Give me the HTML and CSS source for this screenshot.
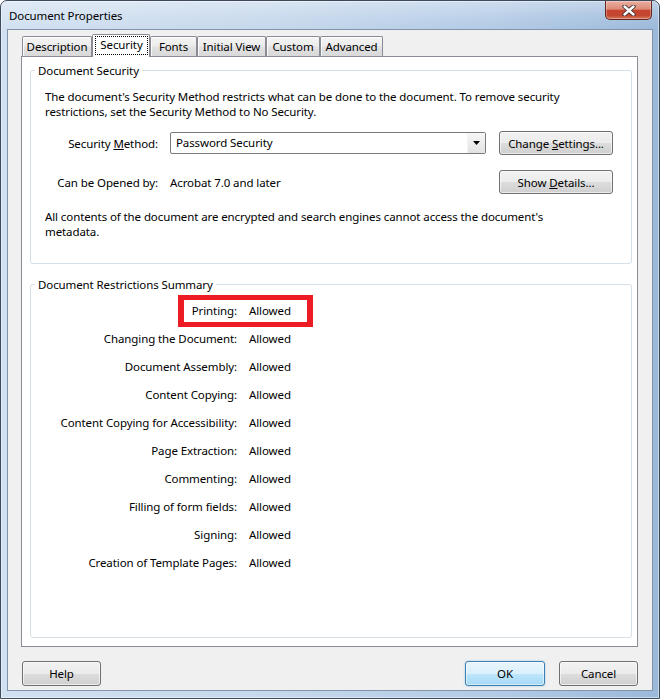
FILE: index.html
```html
<!DOCTYPE html>
<html lang="en">
<head>
<meta charset="utf-8">
<title>Document Properties</title>
<link rel="stylesheet" href="styles.css">
</head>
<body>
<div class="window">
  <div class="titlebar">
    <span class="title">Document Properties</span>
    <div class="close">
      <svg width="14" height="11" viewBox="0 0 14 11">
        <path d="M2.5 1.5 L11.5 9.5 M11.5 1.5 L2.5 9.5" stroke="#3a2d2f" stroke-width="4.2" stroke-linecap="round" fill="none"/>
        <path d="M2.5 1.5 L11.5 9.5 M11.5 1.5 L2.5 9.5" stroke="#ffffff" stroke-width="2.4" stroke-linecap="round" fill="none"/>
      </svg>
    </div>
  </div>
  <div class="client">
    <div class="tabs">
      <div class="tab tab-desc">Description</div>
      <div class="tab tab-sec active"><span class="focus">Security</span></div>
      <div class="tab tab-fonts">Fonts</div>
      <div class="tab tab-view">Initial View</div>
      <div class="tab tab-custom">Custom</div>
      <div class="tab tab-adv">Advanced</div>
    </div>
    <div class="panel">
      <fieldset class="group g1">
        <legend>Document Security</legend>
        <div class="g1-body">
          <p class="desc">The document's Security Method restricts what can be done to the document. To remove security<br>restrictions, set the Security Method to No Security.</p>
          <div class="form">
            <span class="lbl">Security <u>M</u>ethod:</span>
            <div class="combo">
              <span class="combo-text">Password Security</span>
              <span class="combo-btn">
                <svg width="7" height="4" viewBox="0 0 7 4"><polygon points="0,0 7,0 3.5,4" fill="#000"/></svg>
              </span>
            </div>
            <button class="btn" type="button">Change <u>S</u>ettings...</button>
            <span class="lbl">Can be Opened by:</span>
            <span class="val">Acrobat 7.0 and later</span>
            <button class="btn" type="button">Show <u>D</u>etails...</button>
          </div>
          <p class="desc desc2">All contents of the document are encrypted and search engines cannot access the document's<br>metadata.</p>
        </div>
      </fieldset>
      <fieldset class="group g2">
        <legend>Document Restrictions Summary</legend>
        <div class="restrictions">
          <span class="rl">Printing:</span><span class="rv">Allowed</span>
          <span class="rl">Changing the Document:</span><span class="rv">Allowed</span>
          <span class="rl">Document Assembly:</span><span class="rv">Allowed</span>
          <span class="rl">Content Copying:</span><span class="rv">Allowed</span>
          <span class="rl">Content Copying for Accessibility:</span><span class="rv">Allowed</span>
          <span class="rl">Page Extraction:</span><span class="rv">Allowed</span>
          <span class="rl">Commenting:</span><span class="rv">Allowed</span>
          <span class="rl">Filling of form fields:</span><span class="rv">Allowed</span>
          <span class="rl">Signing:</span><span class="rv">Allowed</span>
          <span class="rl">Creation of Template Pages:</span><span class="rv">Allowed</span>
          <div class="highlight"></div>
        </div>
      </fieldset>
    </div>
    <div class="footer">
      <button class="btn fbtn help" type="button">Help</button>
      <button class="btn fbtn ok" type="button">OK</button>
      <button class="btn fbtn cancel" type="button">Cancel</button>
    </div>
  </div>
</div>
</body>
</html>
```
FILE: styles.css
```css
* { box-sizing: border-box; }
html, body { margin: 0; padding: 0; }
body {
  width: 660px;
  height: 699px;
  overflow: hidden;
  background: #ffffff;
  font-family: "Noto Sans", "Open Sans", "DejaVu Sans", sans-serif;
  font-size: 11.5px;
  letter-spacing: -0.1px;
  color: #000;
}

.window {
  width: 660px;
  height: 699px;
  border: 1px solid #3d4a5c;
  border-radius: 7px 7px 0 0;
  padding: 0 6px 7px;
  display: flex;
  flex-direction: column;
  background: linear-gradient(90deg, #d2e1f1 0%, #c6d8ec 40%, #b3cbe6 75%, #9cb9da 100%);
  box-shadow: inset 0 0 0 1px rgba(255,255,255,0.45);
}

.titlebar {
  height: 28px;
  margin: 0 -6px;
  padding: 0 7px;
  display: flex;
  justify-content: space-between;
  align-items: flex-start;
  border-radius: 6px 6px 0 0;
  background: linear-gradient(180deg, rgba(255,255,255,0.35) 0%, rgba(255,255,255,0.1) 60%, rgba(255,255,255,0) 100%);
}
.title {
  margin-top: 7px;
  margin-left: 1px;
  line-height: 15px;
  white-space: nowrap;
}
.close {
  width: 47px;
  height: 19px;
  border: 1px solid #62261d;
  border-top: none;
  border-radius: 0 0 5px 5px;
  background: linear-gradient(180deg, #eab0a2 0%, #dc8a76 45%, #c8442f 52%, #c24630 80%, #d87a60 100%);
  box-shadow: inset 0 0 0 1px rgba(255,255,255,0.3);
  display: flex;
  align-items: center;
  justify-content: center;
}

.client {
  flex: 1;
  border: 1px solid #8194aa;
  background: #f0f0f0;
  padding: 4px 14px 4px 13px;
  display: flex;
  flex-direction: column;
}

.tabs {
  height: 22px;
  display: flex;
  align-items: flex-end;
  padding-left: 1px;
}
.tab {
  height: 20px;
  border: 1px solid #898c95;
  border-bottom: none;
  border-radius: 2px 2px 0 0;
  background: linear-gradient(180deg, #f5f5f5 0%, #ececec 45%, #e1e1e1 55%, #d9d9d9 100%);
  box-shadow: inset 1px 1px 0 rgba(255,255,255,0.8);
  display: flex;
  align-items: center;
  justify-content: center;
  line-height: 15px;
  white-space: nowrap;
  flex: none;
}
.tab-desc { width: 70px; }
.tab-sec { width: 58px; }
.tab-fonts { width: 47px; }
.tab-view { width: 69px; }
.tab-custom { width: 54px; }
.tab-adv { width: 63px; }
.tab.active {
  height: 23px;
  margin-bottom: -1px;
  background: #ffffff;
  box-shadow: none;
  position: relative;
  z-index: 1;
  align-items: flex-start;
  justify-content: flex-start;
  padding-top: 1px;
  padding-left: 2px;
}
.focus {
  width: 53px;
  height: 19px;
  border: 1px dotted #000;
  text-align: center;
  line-height: 16px;
}

.panel {
  height: 591px;
  flex: none;
  border: 1px solid #898c95;
  background: #ffffff;
  padding: 0 5px 8px 8px;
  display: flex;
  flex-direction: column;
}

.group {
  margin: 0;
  padding: 0;
  min-width: 0;
  border: 1px solid #d5dfe5;
  border-radius: 3px;
}
.group legend {
  margin-left: 4px;
  padding: 0 3px;
  line-height: 15px;
  white-space: nowrap;
}
.g1 {
  margin-top: 6px;
  padding: 0 0 24px 0;
}
.g1-body { padding-left: 14px; }
.desc {
  margin: 11px 0 0;
  line-height: 15px;
  white-space: nowrap;
}
.desc2 { margin-top: 15px; }

.form {
  margin-top: 12px;
  display: grid;
  grid-template-columns: 113px 317px 114px;
  grid-auto-rows: 24px;
  column-gap: 12px;
  row-gap: 15px;
  align-items: center;
}
.lbl {
  text-align: right;
  white-space: nowrap;
  line-height: 15px;
}
.val { white-space: nowrap; line-height: 15px; }

.combo {
  width: 316px;
  height: 22px;
  border: 1px solid #7a7a7a;
  border-radius: 2px;
  background: #ffffff;
  display: flex;
}
.combo-text {
  flex: 1;
  padding-left: 5px;
  line-height: 19px;
  white-space: nowrap;
}
.combo-btn {
  width: 18px;
  background: linear-gradient(180deg, #f7f7f7 0%, #ededed 50%, #e2e2e2 100%);
  border-left: 1px solid #f4f4f4;
  display: flex;
  align-items: center;
  justify-content: center;
}

.btn {
  font: inherit;
  letter-spacing: inherit;
  color: #000;
  height: 24px;
  width: 114px;
  padding: 0;
  border: 1px solid #707070;
  border-radius: 3px;
  background: linear-gradient(180deg, #f2f2f2 0%, #ebebeb 50%, #dddddd 51%, #cfcfcf 100%);
  box-shadow: inset 0 0 0 1px rgba(255,255,255,0.6);
  text-align: center;
  white-space: nowrap;
  line-height: 15px;
}

.g2 {
  margin-top: 13px;
  flex: 1;
  padding: 0;
}
.restrictions {
  position: relative;
  margin-top: 4px;
  display: grid;
  grid-template-columns: 206px auto;
  grid-auto-rows: 28px;
  column-gap: 12px;
  align-items: center;
  line-height: 15px;
}
.rl { text-align: right; white-space: nowrap; }
.rv { white-space: nowrap; }
.highlight {
  position: absolute;
  top: -1px;
  left: 147px;
  width: 135px;
  height: 32px;
  border-style: solid;
  border-color: #ed1c24;
  border-width: 5px 6px;
}

.footer {
  margin-top: 14px;
  display: flex;
  padding-left: 1px;
}
.fbtn { height: 25px; width: 79px; }
.ok {
  margin-left: auto;
  width: 80px;
  border-color: #3c7fb1;
  background: linear-gradient(180deg, #eaf6fd 0%, #d9f0fc 50%, #bee6fd 51%, #a7d9f5 100%);
  box-shadow: inset 0 0 0 1px rgba(255,255,255,0.5), 0 0 2px rgba(80,170,230,0.6);
}
.cancel { margin-left: 14px; }
```
